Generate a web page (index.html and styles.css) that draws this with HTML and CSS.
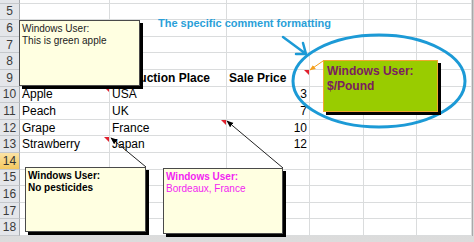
FILE: index.html
```html
<!DOCTYPE html>
<html>
	<head>
		<meta charset="utf-8" />
		<title>Comment formatting</title>
		<link rel="stylesheet" href="styles.css">
	</head>
	<body>
		<div class="sheet">
			<div class="grid">
				<div class="row edge"><span class="hd"></span><span></span><span></span><span></span><span></span><span></span><span></span></div>
				<div class="row"><span class="hd">5</span><span></span><span></span><span></span><span></span><span></span><span></span></div>
				<div class="row"><span class="hd">6</span><span></span><span></span><span></span><span></span><span></span><span></span></div>
				<div class="row"><span class="hd">7</span><span></span><span></span><span></span><span></span><span></span><span></span></div>
				<div class="row"><span class="hd">8</span><span></span><span></span><span></span><span></span><span></span><span></span></div>
				<div class="row"><span class="hd">9</span><span class="b">Name</span><span class="b">Production Place</span><span class="b">Sale Price</span><span></span><span></span><span></span></div>
				<div class="row"><span class="hd">10</span><span>Apple</span><span>USA</span><span class="num">3</span><span></span><span></span><span></span></div>
				<div class="row"><span class="hd">11</span><span>Peach</span><span>UK</span><span class="num">7</span><span></span><span></span><span></span></div>
				<div class="row"><span class="hd">12</span><span>Grape</span><span>France</span><span class="num">10</span><span></span><span></span><span></span></div>
				<div class="row"><span class="hd">13</span><span>Strawberry</span><span>Japan</span><span class="num">12</span><span></span><span></span><span></span></div>
				<div class="row"><span class="hd active">14</span><span></span><span></span><span></span><span></span><span></span><span></span></div>
				<div class="row"><span class="hd">15</span><span></span><span></span><span></span><span></span><span></span><span></span></div>
				<div class="row"><span class="hd">16</span><span></span><span></span><span></span><span></span><span></span><span></span></div>
				<div class="row"><span class="hd">17</span><span></span><span></span><span></span><span></span><span></span><span></span></div>
				<div class="row"><span class="hd">18</span><span></span><span></span><span></span><span></span><span></span><span></span></div>
			</div>

			<svg class="marks" width="474" height="242" viewBox="0 0 474 242">
				<defs>
					<marker id="tip" viewBox="0 0 10 10" refX="9" refY="5" markerWidth="7" markerHeight="7" orient="auto-start-reverse">
						<path d="M0 1 L10 5 L0 9 Z" fill="#000" />
					</marker>
					<marker id="tip-orange" viewBox="0 0 10 10" refX="9" refY="5" markerWidth="6" markerHeight="6" orient="auto-start-reverse">
						<path d="M0 1 L10 5 L0 9 Z" fill="#f5a01e" />
					</marker>
				</defs>
				<!-- comment indicators -->
				<path class="flag" d="M104 87 L109 87 L109 92 Z" />
				<path class="flag" d="M104 137 L109 137 L109 142 Z" />
				<path class="flag" d="M221 120 L226 120 L226 125 Z" />
				<path class="flag" d="M304 70 L309 70 L309 75 Z" />
				<!-- connectors -->
				<line class="wire" x1="146" y1="167" x2="111" y2="138" marker-end="url(#tip)" />
				<line class="wire" x1="283" y1="168" x2="227" y2="121" marker-end="url(#tip)" />
				<line class="wire orange" x1="323" y1="61" x2="310" y2="70" marker-end="url(#tip-orange)" />
				<!-- highlight -->
				<ellipse class="ring" cx="379" cy="81" rx="86" ry="46" />
				<path class="pointer" d="M283 37 L306 54 M303 43 L306 54 L296 54" />
			</svg>

			<div class="caption">The specific comment formatting</div>

			<div class="note apple">
				<p>Windows User:</p>
				<p>This is green apple</p>
			</div>
			<div class="note berry">
				<p class="b">Windows User:</p>
				<p class="b">No pesticides</p>
			</div>
			<div class="note grape">
				<p class="b">Windows User:</p>
				<p>Bordeaux, France</p>
			</div>
			<div class="note price">
				<p>Windows User:</p>
				<p>$/Pound</p>
			</div>
		</div>
	</body>
</html>
```

FILE: styles.css
```css
html, body { margin: 0; padding: 0; background: #fff; }
body {
	width: 474px;
	height: 242px;
	overflow: hidden;
	font-family: 'Liberation Sans', Arial, sans-serif;
	color: #000;
}
p { margin: 0; }

.sheet {
	position: relative;
	width: 474px;
	height: 242px;
	background: linear-gradient(#c9c9c9, #dcdcdc);
}
.grid {
	width: 472px;
	background: #fff;
	border-right: 1px solid #a9a9a9;
}
.row {
	display: grid;
	grid-template-columns: 20px 90px 117px 83px 54px 53px 55px;
	height: 16.6px;
}
.row.edge { height: 3.7px; }
.row span {
	display: flex;
	align-items: center;
	padding: 0 2px;
	font-size: 12px;
	white-space: nowrap;
	overflow: hidden;
	border-right: 1px solid #dadcdd;
	border-bottom: 1px solid #dadcdd;
	box-sizing: border-box;
}
.row span.b { font-weight: bold; }
.row span.num { justify-content: flex-end; }
.row span.hd {
	justify-content: center;
	padding: 0;
	color: #3b3b3b;
	background: #e4e6ea;
	border-right: 1px solid #a7abb0;
	border-bottom: 1px solid #c5c8cc;
}
.row span.hd.active {
	background: linear-gradient(#fbe3a6, #f4c85f);
	color: #333;
}

.marks { position: absolute; top: 0; left: 0; }
.flag { fill: #e0212e; }
.wire { stroke: #222; stroke-width: 1; }
.wire.orange { stroke: #f5a01e; }
.ring { fill: none; stroke: #1c9ad6; stroke-width: 3; }
.pointer { fill: none; stroke: #1c9ad6; stroke-width: 2.5; stroke-linecap: round; stroke-linejoin: round; }

.caption {
	position: absolute;
	left: 158px;
	top: 17px;
	font-size: 11px;
	font-weight: bold;
	color: #2a9fd8;
	white-space: nowrap;
}

.note {
	position: absolute;
	box-sizing: border-box;
	padding: 2px 2px;
	font-size: 10px;
	line-height: 12px;
	background: #ffffe1;
	border: 1px solid #4a4a4a;
	box-shadow: 3px 3px 0 #000;
	white-space: nowrap;
}
.note .b { font-weight: bold; }
.note.apple { left: 19px; top: 20px; width: 121px; height: 66px; color: #222; }
.note.berry { left: 25px; top: 167px; width: 121px; height: 65px; }
.note.grape { left: 163px; top: 168px; width: 120px; height: 66px; color: #f21ef2; }
.note.price {
	left: 323px;
	top: 60px;
	width: 115px;
	height: 52px;
	padding: 3px 3px;
	font-size: 12px;
	line-height: 15px;
	font-weight: bold;
	color: #7a2060;
	background: #99cc00;
	border-color: #f0a830;
}
```
